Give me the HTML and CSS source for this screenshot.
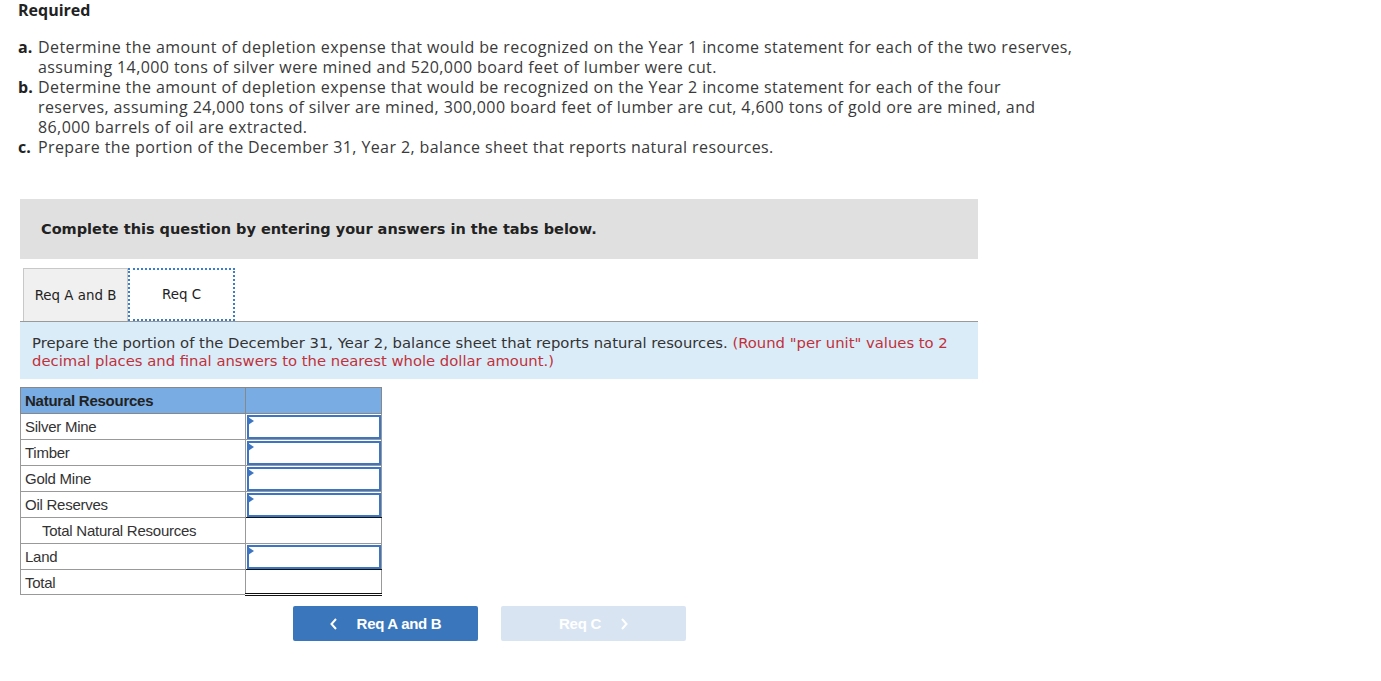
FILE: index.html
```html
<!DOCTYPE html>
<html>
<head>
<meta charset="utf-8">
<link rel="stylesheet" href="styles.css">
</head>
<body>
<div class="page">
  <div class="req-title">Required</div>
  <ul class="req-list">
    <li><span class="lbl">a.</span><span>Determine the amount of depletion expense that would be recognized on the Year 1 income statement for each of the two reserves,<br>assuming 14,000 tons of silver were mined and 520,000 board feet of lumber were cut.</span></li>
    <li><span class="lbl">b.</span><span>Determine the amount of depletion expense that would be recognized on the Year 2 income statement for each of the four<br>reserves, assuming 24,000 tons of silver are mined, 300,000 board feet of lumber are cut, 4,600 tons of gold ore are mined, and<br>86,000 barrels of oil are extracted.</span></li>
    <li><span class="lbl">c.</span><span>Prepare the portion of the December 31, Year 2, balance sheet that reports natural resources.</span></li>
  </ul>

  <div class="question">
    <div class="banner">Complete this question by entering your answers in the tabs below.</div>
    <div class="tabs">
      <div class="tab">Req A and B</div>
      <div class="tab active">Req C</div>
    </div>
    <div class="info">Prepare the portion of the December 31, Year 2, balance sheet that reports natural resources. <span class="note">(Round "per unit" values to 2 decimal places and final answers to the nearest whole dollar amount.)</span></div>

    <table class="sheet">
      <tr class="head"><td class="c1">Natural Resources</td><td class="c2"></td></tr>
      <tr><td class="c1">Silver Mine</td><td class="c2"><div class="inp"></div></td></tr>
      <tr><td class="c1">Timber</td><td class="c2"><div class="inp"></div></td></tr>
      <tr><td class="c1">Gold Mine</td><td class="c2"><div class="inp"></div></td></tr>
      <tr><td class="c1">Oil Reserves</td><td class="c2 under"><div class="inp"></div></td></tr>
      <tr><td class="c1 indent">Total Natural Resources</td><td class="c2"></td></tr>
      <tr><td class="c1">Land</td><td class="c2 under"><div class="inp"></div></td></tr>
      <tr class="last"><td class="c1">Total</td><td class="c2 dbl"></td></tr>
    </table>

    <div class="nav">
      <button class="btn prev"><svg class="chev" width="8" height="12" viewBox="0 0 8 12"><polyline points="6,1 1.5,6 6,11" fill="none" stroke="#fff" stroke-width="2"/></svg>Req A and B</button>
      <button class="btn next">Req C<svg class="chev" width="8" height="12" viewBox="0 0 8 12"><polyline points="2,1 6.5,6 2,11" fill="none" stroke="#fff" stroke-width="2"/></svg></button>
    </div>
  </div>
</div>
</body>
</html>
```

FILE: styles.css
```css
html, body { margin: 0; padding: 0; background: #fff; }
.page { font-family: "Open Sans", Lato, sans-serif; color: #333; }
.req-title { font-size: 16px; line-height: 20px; font-weight: 700; padding-left: 18px; color: #222; }
.req-list { list-style: none; margin: 17px 0 0 0; padding: 0 0 0 18px; font-size: 16px; line-height: 20px; letter-spacing: 0.4px; width: 1200px; white-space: nowrap; color: #3a3a3a; }
.req-list li { display: flex; }
.req-list .lbl { flex: 0 0 20px; font-weight: 700; letter-spacing: 0; color: #222; }
.question { margin: 42px 0 0 20px; width: 958px; }
.banner { background: #e0e0e0; height: 60px; display: flex; align-items: center; padding-left: 21px; font-family: "DejaVu Sans", Verdana, sans-serif; font-weight: 700; font-size: 14.5px; color: #222; }
.tabs { display: flex; margin-top: 9px; padding-left: 3px; height: 53px; }
.tab { box-sizing: border-box; height: 53px; display: flex; align-items: center; justify-content: center; font-family: "DejaVu Sans", Verdana, sans-serif; font-size: 13.4px; color: #222; }
.tab:first-child { width: 105px; background: #f0f0f0; border: 1px solid #c8c8c8; border-bottom: none; }
.tab.active { width: 107px; background: #fff; border: 2px dotted #3d7cc9; }
.info { box-sizing: border-box; border-top: 1px solid #999; background: #dbecf9; height: 58px; padding: 12px 12px 0 12px; font-family: "DejaVu Sans", Verdana, sans-serif; font-size: 14.8px; line-height: 18px; color: #333; }
.info .note { color: #c0313a; }
.sheet { margin-top: 8px; border-collapse: collapse; font-family: "Liberation Sans", Arial, sans-serif; font-size: 15px; letter-spacing: -0.25px; color: #333; }
.sheet td { height: 25px; padding: 0; border: 1px solid #999; }
.sheet .c1 { width: 225px; padding-left: 4px; box-sizing: border-box; }
.sheet .c2 { width: 135px; padding: 0; }
.sheet .head td { background: #78ace3; font-weight: 700; border-color: #888; color: #222; }
.sheet .indent { padding-left: 21px; }
.sheet .under { border-bottom: 1px solid #111; }
.sheet .last td { height: 23px; }
.sheet .dbl { border-bottom: 3px double #111; }
.inp { position: relative; box-sizing: border-box; height: 24px; margin: 0 0 0 1px; border: 2px solid #3d75c2; background: #fff; }
.inp::before { content: ""; position: absolute; left: -1px; top: 0; border-left: 6px solid #3d75c2; border-top: 4px solid transparent; border-bottom: 4px solid transparent; }
.nav { display: flex; gap: 23px; margin-top: 10px; padding-left: 273px; }
.btn { box-sizing: border-box; width: 185px; height: 35px; border: none; border-radius: 2px; font-family: Arial, "Liberation Sans", sans-serif; font-weight: 700; font-size: 15px; letter-spacing: -0.3px; color: #fff; display: flex; align-items: center; justify-content: center; gap: 19px; padding: 0; }
.prev { background: #3a76bb; }
.next { background: #d8e4f2; color: #fff; }
```
